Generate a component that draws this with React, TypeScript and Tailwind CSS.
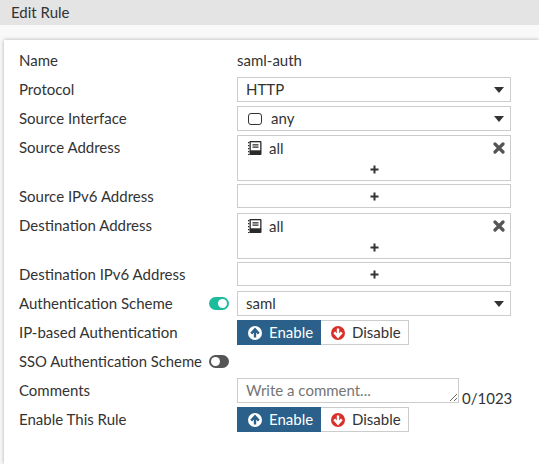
const box = "w-[274px] border border-[#ccc] bg-white";

function Caret() {
  return (
    <svg width="10" height="6" viewBox="0 0 10 6" className="flex-shrink-0">
      <path d="M0 0h10L5 6z" fill="#333" />
    </svg>
  );
}

function AddressIcon() {
  return (
    <svg width="14" height="14" viewBox="0 0 14 14" className="flex-shrink-0">
      <path d="M1.5 0h11a1 1 0 0 1 1 1v12a1 1 0 0 1-1 1h-11z" fill="#2a2a2a" />
      <path d="M2.8 1.3h9.4v8H2.8z" fill="#fff" />
      <path d="M4.5 3.2h6v1.2h-6zM4.5 5.6h6v1.2h-6z" fill="#2a2a2a" />
      <path d="M0 1h1.3v1.2H0zM0 4h1.3v1.2H0zM0 7h1.3v1.2H0zM0 10h1.3v1.2H0zM0 13h1.3v1H0z" fill="#2a2a2a" />
    </svg>
  );
}

function Remove() {
  return (
    <svg width="12" height="12" viewBox="0 0 12 12" className="flex-shrink-0">
      <path d="M2 2l8 8M10 2l-8 8" stroke="#555" strokeWidth="3.2" strokeLinecap="round" />
    </svg>
  );
}

function Plus() {
  return (
    <svg width="9" height="9" viewBox="0 0 9 9">
      <path d="M4.5 0.5v8M0.5 4.5h8" stroke="#333" strokeWidth="2" />
    </svg>
  );
}

function Row({ label, extra, children, top = false, slim = false, labelClass = "" }: { label: string; extra?: React.ReactNode; children?: React.ReactNode; top?: boolean; slim?: boolean; labelClass?: string }) {
  return (
    <div className={`flex ${top ? "items-start" : "items-center"} ${slim ? "h-[24px]" : "min-h-[25px]"}`}>
      <div className={`w-[218px] flex items-center justify-between pr-[8px] ${top ? "h-[25px]" : ""}`}>
        <span className={labelClass}>{label}</span>
        {extra}
      </div>
      {children}
    </div>
  );
}

function Select({ children }: { children: React.ReactNode }) {
  return (
    <div className={`${box} h-[25px] flex items-center justify-between pl-[8px] pr-[6px]`}>
      <div className="flex items-center">{children}</div>
      <Caret />
    </div>
  );
}

function AddressBox() {
  return (
    <div className={`${box} h-[46px] flex flex-col`}>
      <div className="flex items-center justify-between pl-[10px] pr-[5px] pt-[1px] h-[23px]">
        <div className="flex items-center gap-[7px]">
          <AddressIcon />
          <span>all</span>
        </div>
        <Remove />
      </div>
      <div className="flex-1 flex items-center justify-center">
        <Plus />
      </div>
    </div>
  );
}

function PlusBox() {
  return (
    <div className={`${box} h-[24px] flex items-center justify-center`}>
      <Plus />
    </div>
  );
}

function Toggle({ on }: { on: boolean }) {
  return (
    <div className={`w-[20px] h-[13px] rounded-full flex items-center px-[2px] ${on ? "bg-[#1abc9c] justify-end" : "bg-[#555] justify-start"}`}>
      <div className="w-[9px] h-[9px] rounded-full bg-white" />
    </div>
  );
}

function EnableDisable() {
  return (
    <div className="flex h-[25px]">
      <div className="w-[84px] bg-[#2a6089] text-white flex items-center pl-[11px] gap-[7px]">
        <svg width="14" height="14" viewBox="0 0 14 14">
          <circle cx="7" cy="7" r="7" fill="#fff" />
          <path d="M7 11.5V4M3.2 7.6L7 3.4 10.8 7.6" stroke="#2a6089" strokeWidth="2.4" fill="none" />
        </svg>
        <span>Enable</span>
      </div>
      <div className="w-[88px] border border-l-0 border-[#ccc] bg-white flex items-center pl-[10px] gap-[7px]">
        <svg width="14" height="14" viewBox="0 0 14 14">
          <circle cx="7" cy="7" r="7" fill="#d9302a" />
          <path d="M7 2.5v7.5M3.2 6.4L7 10.6 10.8 6.4" stroke="#fff" strokeWidth="2.4" fill="none" />
        </svg>
        <span>Disable</span>
      </div>
    </div>
  );
}

export default function App() {
  return (
    <div className="w-[539px] h-[464px] overflow-hidden bg-[#f9f9f9] text-[15px] text-[#333] font-['Lato',sans-serif]">
      <div className="h-[25px] bg-[#e4e4e4] flex items-center pl-[11px]">Edit Rule</div>
      <div className="ml-[4px] mt-[15px] h-[424px] bg-white shadow-[0_0_4px_rgba(0,0,0,0.3)] pl-[15px] pt-[8px] flex flex-col">
        <Row label="Name">saml-auth</Row>
        <div className="h-[4px]" />
        <Row label="Protocol">
          <Select><span>HTTP</span></Select>
        </Row>
        <div className="h-[4px]" />
        <Row label="Source Interface">
          <Select>
            <span className="w-[14px] h-[12px] ml-[2px] border border-[#333] rounded-[3px] mr-[9px]" />
            <span>any</span>
          </Select>
        </Row>
        <div className="h-[4px]" />
        <Row label="Source Address" top><AddressBox /></Row>
        <div className="h-[3px]" />
        <Row label="Source IPv6 Address" slim><PlusBox /></Row>
        <div className="h-[5px]" />
        <Row label="Destination Address" top><AddressBox /></Row>
        <div className="h-[3px]" />
        <Row label="Destination IPv6 Address" slim><PlusBox /></Row>
        <div className="h-[5px]" />
        <Row label="Authentication Scheme" extra={<Toggle on />}>
          <Select><span>saml</span></Select>
        </Row>
        <div className="h-[4px]" />
        <Row label="IP-based Authentication"><EnableDisable /></Row>
        <div className="h-[4px]" />
        <Row label="SSO Authentication Scheme" labelClass="text-[14.8px]" extra={<Toggle on={false} />} />
        <div className="h-[4px]" />
        <Row label="Comments">
          <textarea
            placeholder="Write a comment..."
            className="w-[222px] h-[25px] border border-[#ccc] bg-white pl-[8px] pt-[1px] leading-[20px] placeholder:text-[#757575] outline-none"
          />
          <span className="ml-[3px] self-end leading-[10px]">0/1023</span>
        </Row>
        <div className="h-[4px]" />
        <Row label="Enable This Rule"><EnableDisable /></Row>
      </div>
    </div>
  );
}
